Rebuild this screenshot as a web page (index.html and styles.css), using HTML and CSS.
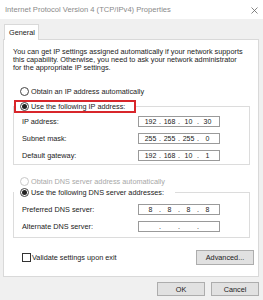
FILE: index.html
```html
<!DOCTYPE html>
<html>
<head>
<meta charset="utf-8">
<link rel="stylesheet" href="styles.css">
</head>
<body>
<div class="window">
  <div class="titlebar">
    <span class="title">Internet Protocol Version 4 (TCP/IPv4) Properties</span>
    <svg class="close" width="7" height="7" viewBox="0 0 7 7"><path d="M0.5 0.5L6.5 6.5M6.5 0.5L0.5 6.5" stroke="#666" stroke-width="0.8" fill="none"/></svg>
  </div>
  <div class="content">
    <div class="tabs"><div class="tab">General</div></div>
    <div class="panel">
      <p class="intro">You can get IP settings assigned automatically if your network supports<br>this capability. Otherwise, you need to ask your network administrator<br>for the appropriate IP settings.</p>
      <div class="radio-row first"><span class="radio"></span><span>Obtain an IP address automatically</span></div>
      <fieldset class="group ip-group">
        <legend class="legend highlight"><span class="radio checked"></span><span>Use the following IP address:</span></legend>
        <div class="field"><span class="label">IP address:</span><div class="ipbox"><span>192</span><i>.</i><span>168</span><i>.</i><span>10</span><i>.</i><span>30</span></div></div>
        <div class="field"><span class="label">Subnet mask:</span><div class="ipbox"><span>255</span><i>.</i><span>255</span><i>.</i><span>255</span><i>.</i><span>0</span></div></div>
        <div class="field"><span class="label">Default gateway:</span><div class="ipbox"><span>192</span><i>.</i><span>168</span><i>.</i><span>10</span><i>.</i><span>1</span></div></div>
      </fieldset>
      <div class="radio-row dns disabled"><span class="radio"></span><span>Obtain DNS server address automatically</span></div>
      <fieldset class="group dns-group">
        <legend class="legend"><span class="radio checked"></span><span>Use the following DNS server addresses:</span></legend>
        <div class="field"><span class="label">Preferred DNS server:</span><div class="ipbox"><span>8</span><i>.</i><span>8</span><i>.</i><span>8</span><i>.</i><span>8</span></div></div>
        <div class="field"><span class="label">Alternate DNS server:</span><div class="ipbox"><span></span><i>.</i><span></span><i>.</i><span></span><i>.</i><span></span></div></div>
      </fieldset>
      <div class="bottom-row">
        <label class="check"><span class="checkbox"></span><span>Validate settings upon exit</span></label>
        <div class="button advanced">Advanced...</div>
      </div>
    </div>
    <div class="footer">
      <div class="button">OK</div>
      <div class="button">Cancel</div>
    </div>
  </div>
</div>
</body>
</html>
```

FILE: styles.css
```css
html, body {
  margin: 0;
  padding: 0;
}
body {
  width: 263px;
  height: 300px;
  overflow: hidden;
  background: #f0f0f0;
  font-family: "Liberation Sans", Arial, sans-serif;
  font-size: 7.3px;
  color: #222;
}
.window {
  width: 263px;
  height: 300px;
  background: #f0f0f0;
}
.titlebar {
  height: 19px;
  background: #fff;
  display: flex;
  align-items: center;
  justify-content: space-between;
  padding: 0 5px 0 5px;
  box-sizing: border-box;
  color: #8a8a8a;
  font-size: 7.6px;
}
.close {
  display: block;
  margin-top: 1px;
}
.content {
  padding: 5px 4px 0 3px;
}
.tabs {
  display: flex;
  padding-left: 1px;
}
.tab {
  height: 16px;
  box-sizing: border-box;
  padding: 3px 0 0 4px;
  width: 35px;
  background: #fff;
  border: 1px solid #d9d9d9;
  border-bottom: none;
  margin-bottom: -1px;
  position: relative;
  z-index: 1;
}
.panel {
  background: #fff;
  border: 1px solid #d9d9d9;
  width: 256px;
  height: 238px;
  box-sizing: border-box;
  padding: 7.5px 0 0 9px;
}
.intro {
  margin: 0;
  line-height: 8.4px;
}
.radio-row {
  display: flex;
  align-items: center;
  height: 10px;
  padding-left: 7px;
  gap: 2px;
}
.radio-row.first {
  margin-top: 14px;
}
.radio {
  width: 9px;
  height: 9px;
  box-sizing: border-box;
  border: 1px solid #444;
  border-radius: 50%;
  display: inline-flex;
  align-items: center;
  justify-content: center;
  flex: none;
  background: #fff;
}
.radio.checked::after {
  content: "";
  width: 5px;
  height: 5px;
  border-radius: 50%;
  background: #222;
}
.disabled {
  color: #a8a8a8;
}
.disabled .radio {
  border-color: #c8c8c8;
}
.group {
  width: 237px;
  box-sizing: border-box;
  margin: 0;
  border: 1px solid #dcdcdc;
  padding: 0 0 0 8px;
  min-width: 0;
}
.ip-group {
  margin-top: 3px;
  padding-bottom: 3px;
}
.dns-group {
  margin-top: 0;
  padding-bottom: 5px;
}
.legend {
  display: flex;
  align-items: center;
  gap: 2px;
  height: 13px;
  box-sizing: border-box;
  padding: 0 9px 0 4px;
  margin-left: -8px;
  border: 2px solid transparent;
}
.legend.highlight {
  border-color: #d8262b;
}
.field {
  display: flex;
  align-items: center;
  height: 11px;
  margin-top: 6px;
}
.ip-group .field:first-of-type {
  margin-top: 3.5px;
}
.dns-group .field:first-of-type {
  margin-top: 5px;
}
.label {
  width: 116px;
}
.ipbox {
  width: 82px;
  height: 11px;
  box-sizing: border-box;
  border: 1px solid #9a9a9a;
  display: grid;
  grid-template-columns: 1fr auto 1fr auto 1fr auto 1fr;
  align-items: center;
  padding: 0 4px;
  text-align: center;
  font-size: 7px;
}
.ipbox i {
  font-style: normal;
  padding: 0 1px;
}
.radio-row.dns {
  margin-top: 11px;
}
.bottom-row {
  display: flex;
  align-items: center;
  justify-content: space-between;
  margin-top: 12px;
  width: 241px;
}
.check {
  display: flex;
  align-items: center;
  gap: 1px;
  padding-left: 9px;
}
.checkbox {
  width: 9px;
  height: 9px;
  box-sizing: border-box;
  border: 1px solid #333;
  background: #fff;
}
.button {
  height: 14px;
  width: 48px;
  box-sizing: border-box;
  border: 1px solid #adadad;
  background: #e1e1e1;
  display: flex;
  align-items: center;
  justify-content: center;
}
.advanced {
  width: 58px;
  height: 15px;
}
.footer {
  display: flex;
  justify-content: flex-end;
  gap: 6px;
  margin-top: 5px;
  padding-right: 0;
}
```
